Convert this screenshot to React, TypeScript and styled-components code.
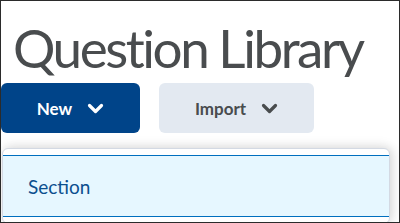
import React from "react";
import styled, { createGlobalStyle } from "styled-components";

const GlobalStyle = createGlobalStyle`
  html, body {
    margin: 0;
    padding: 0;
    background: #ffffff;
  }
  * {
    box-sizing: border-box;
  }
`;

const Frame = styled.div`
  width: 400px;
  height: 223px;
  border: 1px solid #2b2b2b;
  background: #ffffff;
  overflow: hidden;
  display: flex;
  flex-direction: column;
  font-family: Lato, "Open Sans", sans-serif;
`;

const Title = styled.h1`
  margin: 14px 0 0 0;
  padding-left: 12px;
  font-size: 53px;
  font-weight: 400;
  line-height: 66px;
  letter-spacing: -2.45px;
  color: #494c4e;
  white-space: nowrap;
`;

const Toolbar = styled.div`
  display: flex;
  gap: 19px;
  margin-top: 2px;
`;

const Button = styled.button<{ $primary?: boolean; $width: number }>`
  display: flex;
  align-items: center;
  justify-content: center;
  gap: 15px;
  width: ${(p) => p.$width}px;
  height: 50px;
  border: none;
  border-radius: 6px;
  padding: 0;
  font-family: Lato, "Open Sans", sans-serif;
  font-size: 17px;
  font-weight: 700;
  background: ${(p) => (p.$primary ? "#004489" : "#e3e9f1")};
  color: ${(p) => (p.$primary ? "#ffffff" : "#494c4e")};
`;

const Menu = styled.div`
  margin: 15px 0 0 1px;
  width: 388px;
  flex-shrink: 0;
  border: 1px solid #d3d9e3;
  border-radius: 6px;
  background: #ffffff;
  padding: 6px 0 6px 0;
  box-shadow: 0 -2px 12px rgba(0, 0, 0, 0.1), 4px 0 10px rgba(0, 0, 0, 0.08);
`;

const MenuItem = styled.div`
  height: 62px;
  display: flex;
  align-items: center;
  padding-left: 25px;
  border-top: 1px solid #006fbf;
  border-bottom: 1px solid #006fbf;
  background: #e6f7ff;
  color: #0b4f8e;
  font-size: 19px;
`;

function Chevron({ color }: { color: string }) {
  return (
    <svg width="17" height="11" viewBox="0 0 17 11">
      <polyline
        points="2.5,2.5 8.5,8.5 14.5,2.5"
        fill="none"
        stroke={color}
        strokeWidth="3.2"
        strokeLinecap="round"
        strokeLinejoin="round"
      />
    </svg>
  );
}

export default function App() {
  return (
    <>
      <GlobalStyle />
      <Frame>
        <Title>Question Library</Title>
        <Toolbar>
          <Button $primary $width={139}>
            New <Chevron color="#ffffff" />
          </Button>
          <Button $width={155}>
            Import <Chevron color="#494c4e" />
          </Button>
        </Toolbar>
        <Menu>
          <MenuItem>Section</MenuItem>
        </Menu>
      </Frame>
    </>
  );
}
